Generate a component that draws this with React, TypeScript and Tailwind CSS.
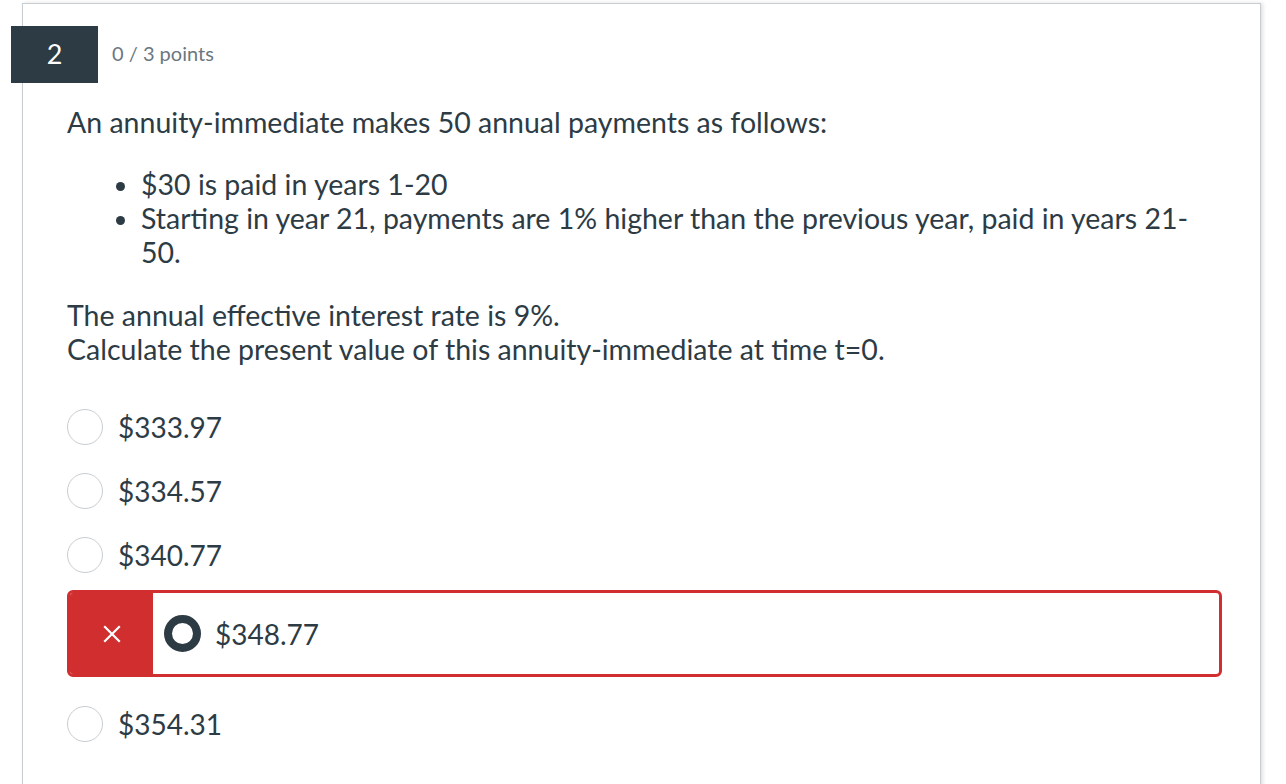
import React from "react";

const Radio = () => (
  <span className="inline-block w-[36px] h-[36px] rounded-full border border-[#c7cdd1] bg-white shrink-0" />
);

const Row = ({ label }: { label: string }) => (
  <div className="h-[64px] flex items-center">
    <Radio />
    <span className="ml-[15px] text-[28px] text-[#2d3b45]">{label}</span>
  </div>
);

export default function App() {
  return (
    <div
      className="bg-white min-h-screen pt-[3px] overflow-hidden"
      style={{ fontFamily: "Lato, 'Noto Sans', sans-serif" }}
    >
      <div className="ml-[22px] w-[1239px] h-[790px] border-t border-l border-r border-[#c7cdd1] shadow-[2px_0_4px_rgba(0,0,0,0.12)] bg-white">
        <div className="flex items-center mt-[22px] -ml-[12px]">
          <div className="w-[87px] h-[57px] bg-[#2d3b45] flex items-center justify-center text-white text-[27px]">
            2
          </div>
          <div className="ml-[14px] text-[20px] text-[#6b7780] -mt-[3px]">0 / 3 points</div>
        </div>
        <div className="pl-[44px] pr-[38px] text-[#2d3b45] text-[28.5px] leading-[34px]">
          <p className="mt-[22px]">An annuity-immediate makes 50 annual payments as follows:</p>
          <ul className="list-disc pl-[74px] mt-[28px]">
            <li>$30 is paid in years 1-20</li>
            <li>Starting in year 21, payments are 1% higher than the previous year, paid in years 21-50.</li>
          </ul>
          <p className="mt-[29px]">
            The annual effective interest rate is 9%.
            <br />
            Calculate the present value of this annuity-immediate at time t=0.
          </p>
          <div className="mt-[29px]">
            <Row label="$333.97" />
            <Row label="$334.57" />
            <Row label="$340.77" />
            <div className="mt-[3px] mb-[15px] h-[87px] flex border-[3px] border-[#d12f2f] rounded-[6px] overflow-hidden">
              <div className="w-[83px] bg-[#d12f2f] flex items-center justify-center">
                <svg width="18" height="18" viewBox="0 0 18 18">
                  <path d="M2 2 L16 16 M16 2 L2 16" stroke="white" strokeWidth="2.2" strokeLinecap="square" />
                </svg>
              </div>
              <div className="flex items-center pl-[11px]">
                <span className="inline-block w-[37px] h-[37px] rounded-full border-[8px] border-[#2d3b45] bg-white shrink-0" />
                <span className="ml-[14px] text-[28px] text-[#2d3b45]">$348.77</span>
              </div>
            </div>
            <Row label="$354.31" />
          </div>
        </div>
      </div>
    </div>
  );
}
